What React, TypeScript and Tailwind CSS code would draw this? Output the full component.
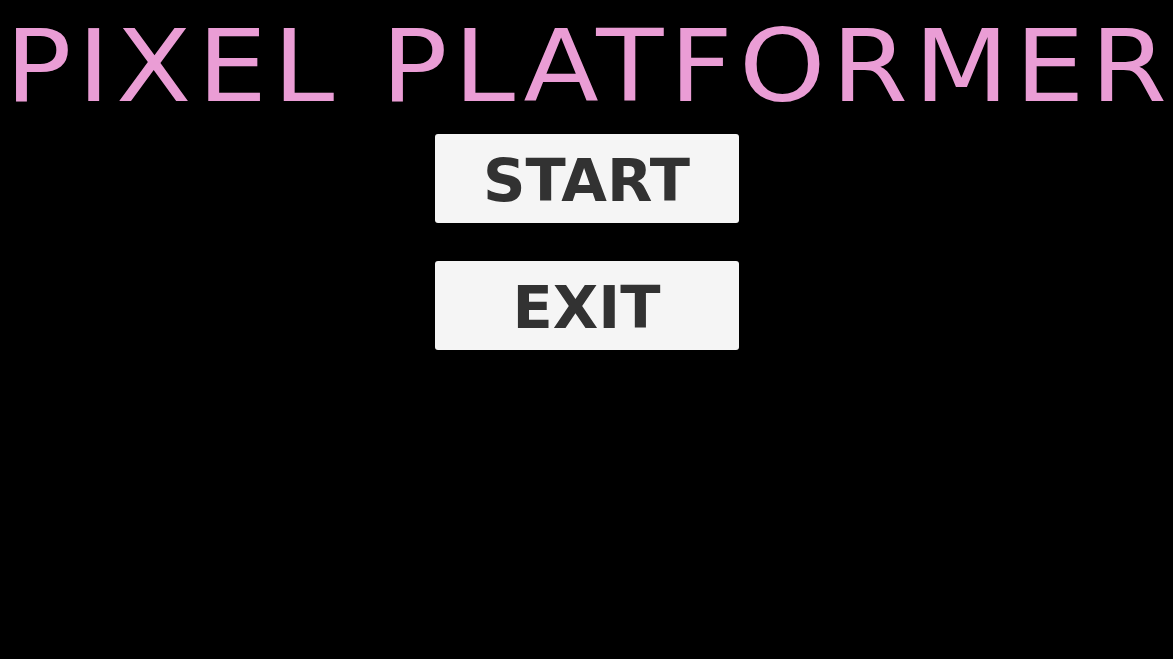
export default function App() {
  return (
    <div className="h-[659px] w-full bg-black overflow-hidden flex flex-col items-center font-['DejaVu_Sans',sans-serif]">
      {/* title, the game font is wider than DejaVu so stretch it a little */}
      <h1 className="mt-[17px] pl-[5px] text-[100px] leading-none font-normal tracking-[5.5px] scale-x-[1.1] text-[#ea9dd5] whitespace-nowrap">
        PIXEL PLATFORMER
      </h1>

      {/* menu buttons */}
      <div className="mt-[17px] flex flex-col gap-[38px]">
        <button className="w-[304px] h-[89px] pt-[4px] rounded-[3px] bg-[#f5f5f5] text-[#323232] text-[59px] leading-none font-bold flex items-center justify-center">
          START
        </button>
        <button className="w-[304px] h-[89px] pt-[4px] rounded-[3px] bg-[#f5f5f5] text-[#323232] text-[59px] leading-none font-bold flex items-center justify-center">
          EXIT
        </button>
      </div>
    </div>
  )
}
